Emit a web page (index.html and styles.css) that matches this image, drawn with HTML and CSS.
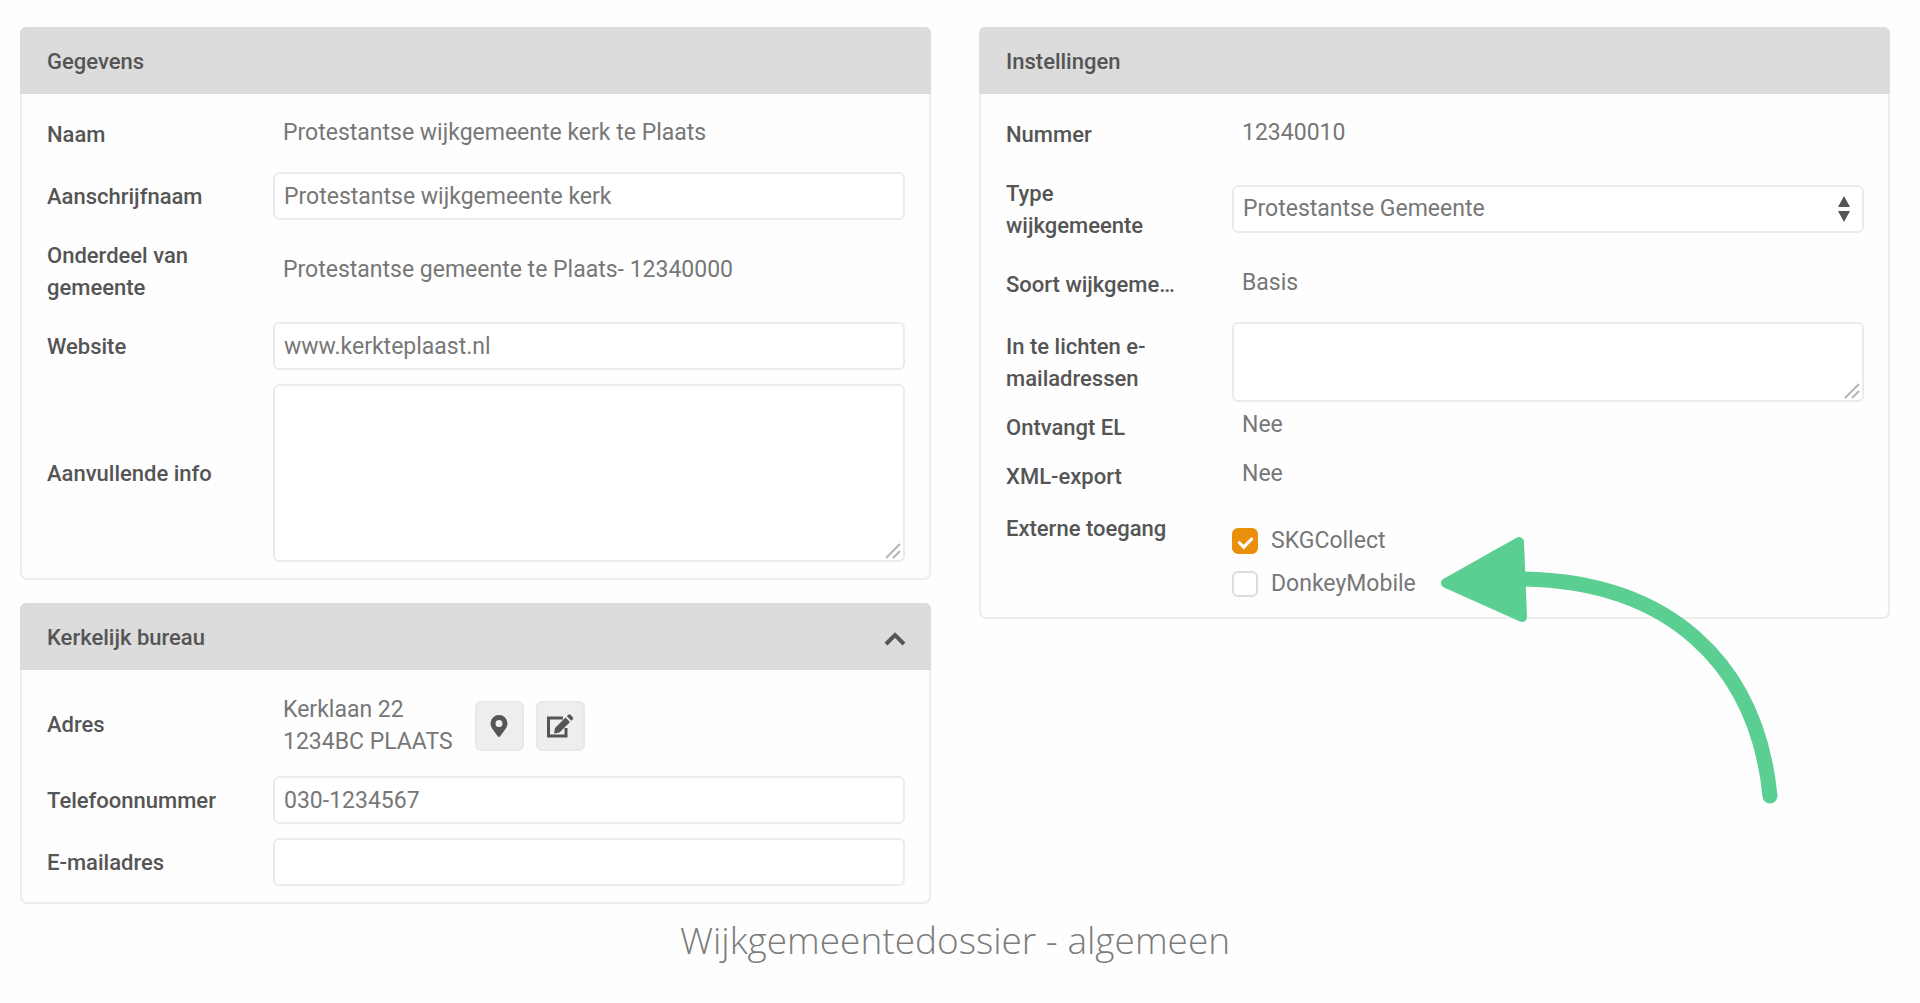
FILE: index.html
```html
<!DOCTYPE html>
<html lang="nl">
    <head>
        <meta charset="UTF-8">
        <title>Wijkgemeentedossier - algemeen</title>
        <meta name="viewport" content="width=device-width, initial-scale=1.0"/>
        <link rel="stylesheet" href="styles.css">
    </head>

    <body>
        <main class="columns">
            <div class="column">
                <section class="card">
                    <div class="card-header">
                        <h2 class="card-title">Gegevens</h2>
                    </div>
                    <div class="card-body">
                        <div class="row">
                            <span class="label">Naam</span>
                            <span class="value">Protestantse wijkgemeente kerk te Plaats</span>
                        </div>
                        <div class="row">
                            <label class="label" for="aanschrijfnaam">Aanschrijfnaam</label>
                            <input class="field" type="text" id="aanschrijfnaam" value="Protestantse wijkgemeente kerk">
                        </div>
                        <div class="row">
                            <span class="label">Onderdeel van gemeente</span>
                            <span class="value">Protestantse gemeente te Plaats- 12340000</span>
                        </div>
                        <div class="row">
                            <label class="label" for="website">Website</label>
                            <input class="field" type="text" id="website" value="www.kerkteplaast.nl">
                        </div>
                        <div class="row">
                            <label class="label" for="info">Aanvullende info</label>
                            <div class="field-wrap">
                                <textarea class="field field-large" id="info"></textarea>
                                <svg class="grip" viewBox="0 0 16 16"><path d="M1 15L15 1M8 15L15 8"/></svg>
                            </div>
                        </div>
                    </div>
                </section>

                <section class="card">
                    <div class="card-header">
                        <h2 class="card-title">Kerkelijk bureau</h2>
                        <button class="toggle" type="button" aria-label="Inklappen">
                            <svg class="chevron" viewBox="0 0 22 14"><path d="M2 12L11 3L20 12"/></svg>
                        </button>
                    </div>
                    <div class="card-body">
                        <div class="row">
                            <span class="label">Adres</span>
                            <div class="address">
                                <span class="address-text">Kerklaan 22<br>1234BC PLAATS</span>
                                <button class="icon-button" type="button" aria-label="Kaart">
                                    <svg class="icon" viewBox="0 0 24 24"><path fill-rule="evenodd" d="M12 1a8.500 8.500 0 0 0-8.500 8.500C3.500 13 6 15.500 10.800 22.300a1.500 1.500 0 0 0 2.400 0C18 15.500 20.500 13 20.500 9.500A8.500 8.500 0 0 0 12 1zm0 5a3.500 3.500 0 1 1 0 7 3.500 3.500 0 0 1 0-7z"/></svg>
                                </button>
                                <button class="icon-button" type="button" aria-label="Bewerken">
                                    <svg class="icon icon-wide" viewBox="0 0 28 24"><path d="M17 4H2.500v18H20v-8" fill="none" stroke="currentColor" stroke-width="3"/><path d="M19.500 3.500l4.500 4.500L13.500 18.500l-5.500 1 1-5.500zM20.800 2.200l1.500-1.500a1.500 1.500 0 0 1 2 0l2.500 2.500a1.500 1.500 0 0 1 0 2l-1.500 1.500z"/></svg>
                                </button>
                            </div>
                        </div>
                        <div class="row">
                            <label class="label" for="telefoon">Telefoonnummer</label>
                            <input class="field" type="text" id="telefoon" value="030-1234567">
                        </div>
                        <div class="row">
                            <label class="label" for="email">E-mailadres</label>
                            <input class="field" type="text" id="email">
                        </div>
                    </div>
                </section>
            </div>

            <div class="column">
                <section class="card">
                    <div class="card-header">
                        <h2 class="card-title">Instellingen</h2>
                    </div>
                    <div class="card-body">
                        <div class="row">
                            <span class="label">Nummer</span>
                            <span class="value">12340010</span>
                        </div>
                        <div class="row">
                            <label class="label" for="type">Type wijkgemeente</label>
                            <div class="field-wrap">
                                <select class="field" id="type">
                                    <option>Protestantse Gemeente</option>
                                </select>
                                <svg class="select-arrows" viewBox="0 0 12 26"><path d="M6 0L12 11H0zM6 26L0 15H12z"/></svg>
                            </div>
                        </div>
                        <div class="row">
                            <span class="label">Soort wijkgeme…</span>
                            <span class="value">Basis</span>
                        </div>
                        <div class="row row-flush">
                            <label class="label" for="emails">In te lichten e-mailadressen</label>
                            <div class="field-wrap">
                                <textarea class="field field-medium" id="emails"></textarea>
                                <svg class="grip" viewBox="0 0 16 16"><path d="M1 15L15 1M8 15L15 8"/></svg>
                            </div>
                        </div>
                        <div class="row row-compact">
                            <span class="label">Ontvangt EL</span>
                            <span class="value">Nee</span>
                        </div>
                        <div class="row row-compact">
                            <span class="label">XML-export</span>
                            <span class="value">Nee</span>
                        </div>
                        <div class="row row-top">
                            <span class="label">Externe toegang</span>
                            <div class="checks">
                                <label class="check"><input class="checkbox" type="checkbox" checked> SKGCollect</label>
                                <label class="check"><input class="checkbox" type="checkbox"> DonkeyMobile</label>
                            </div>
                        </div>
                    </div>
                    <svg class="arrow" viewBox="0 0 346 278">
                        <path class="arrow-line" d="M80 49C234 49 321 135 334 266"/>
                        <path class="arrow-head" d="M10 53L83 12L86 87z"/>
                    </svg>
                </section>
            </div>
        </main>

        <p class="caption">Wijkgemeentedossier - algemeen</p>
    </body>
</html>
```

FILE: styles.css
```css
* {
    box-sizing: border-box;
}
body {
    margin: 0;
    padding: 27px 30px 0 20px;
    background: #fefefe;
    color: #777;
    font-family: Roboto, sans-serif;
    font-size: 23px;
    line-height: 32px;
}
input, select, textarea, button {
    font: inherit;
    color: inherit;
}

/*LAYOUT*/
.columns {
    display: flex;
    align-items: flex-start;
    gap: 48px;
}
.column {
    flex: 1;
    min-width: 0;
    display: flex;
    flex-direction: column;
    gap: 23px;
}

/*CARD*/
.card {
    position: relative;
    border: 2px solid #ededed;
    border-radius: 7px;
}
.card-header {
    display: flex;
    align-items: center;
    justify-content: space-between;
    height: 67px;
    margin: -2px -2px 0;
    padding: 2px 25px 0 27px;
    background: #dcdcdc;
    border-radius: 6px 6px 0 0;
}
.card-title {
    margin: 0;
    color: #555;
    font-size: 22px;
    font-weight: 500;
}
.card-body {
    padding: 9px 24px 9px 25px;
}

/*ROW*/
.row {
    display: flex;
    align-items: center;
    min-height: 62px;
    padding: 7px 0;
}
.row-flush {
    padding-bottom: 0;
}
.row-compact {
    min-height: 49px;
    padding: 0;
}
.row-top {
    align-items: flex-start;
    padding: 7px 0 3px;
}
.label {
    flex: none;
    width: 182px;
    margin-right: 44px;
    padding: 6px 0 4px;
    color: #555;
    font-size: 22px;
    font-weight: 500;
}
.value {
    padding: 0 10px 3px;
}

/*FIELDS*/
.field {
    flex: 1;
    display: block;
    width: 100%;
    min-width: 0;
    height: 48px;
    padding: 0 9px;
    background: #fff;
    border: 2px solid #ebebeb;
    border-radius: 6px;
    appearance: none;
    resize: none;
}
.field-wrap {
    position: relative;
    flex: 1;
}
.field-medium {
    height: 80px;
}
.field-large {
    height: 178px;
}
.grip {
    position: absolute;
    right: 4px;
    bottom: 3px;
    width: 16px;
    height: 16px;
    fill: none;
    stroke: #b5b5b5;
    stroke-width: 2;
}
.select-arrows {
    position: absolute;
    right: 14px;
    top: 11px;
    width: 12px;
    height: 26px;
    fill: #555;
    pointer-events: none;
}

/*BUTTONS*/
.toggle {
    padding: 2px 0 0;
    border: 0;
    background: none;
    cursor: pointer;
}
.chevron {
    display: block;
    width: 22px;
    height: 14px;
    fill: none;
    stroke: #555;
    stroke-width: 4;
}
.address {
    display: flex;
    align-items: center;
    gap: 12px;
    padding: 8px 10px 4px;
}
.address-text {
    margin-right: 10px;
}
.icon-button {
    display: flex;
    align-items: center;
    justify-content: center;
    width: 49px;
    height: 50px;
    padding: 0;
    color: #555;
    background: #eee;
    border: 2px solid #e8e8e8;
    border-radius: 6px;
    cursor: pointer;
}
.icon {
    width: 24px;
    height: 24px;
    fill: currentColor;
}
.icon-wide {
    width: 28px;
}

/*CHECKBOXES*/
.checks {
    padding-top: 12px;
}
.check {
    display: flex;
    align-items: center;
    gap: 13px;
    height: 43px;
}
.checkbox {
    display: flex;
    justify-content: center;
    width: 26px;
    height: 26px;
    margin: 0;
    border: 2px solid #ddd;
    border-radius: 6px;
    background: #fff;
    appearance: none;
}
.checkbox:checked {
    background: #ea8f0a;
    border-color: #ea8f0a;
}
.checkbox:checked::after {
    content: "";
    width: 6px;
    height: 11px;
    margin-top: 4px;
    border: solid #fff;
    border-width: 0 3px 3px 0;
    transform: rotate(45deg);
}

/*ARROW*/
.arrow {
    position: absolute;
    right: 106px;
    top: 501px;
    width: 346px;
    height: 278px;
    stroke: #5bce92;
    stroke-linecap: round;
    stroke-linejoin: round;
    pointer-events: none;
}
.arrow-line {
    fill: none;
    stroke-width: 15;
}
.arrow-head {
    fill: #5bce92;
    stroke-width: 10;
}

.caption {
    margin: 12px 0 0;
    color: #7c7c7c;
    font-family: "Open Sans", sans-serif;
    font-size: 37px;
    font-weight: 300;
    line-height: 48px;
    text-align: center;
}
```
